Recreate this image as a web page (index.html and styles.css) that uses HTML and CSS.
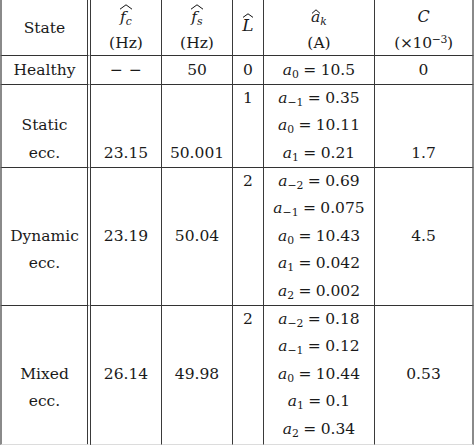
FILE: index.html
```html
<!DOCTYPE html>
<html>
<head>
<meta charset="utf-8">
<link rel="stylesheet" href="styles.css">
</head>
<body>
<div class="tbl">
  <!-- header -->
  <div class="c first hd mid">State</div>
  <div class="c hd">
    <div><span class="hat"><svg class="hs hw" width="13" height="6" viewBox="0 0 13 6"><path d="M0.5 5.2 L6.5 0.8 L12.5 5.2" /></svg><i>f</i><sub><i>c</i></sub></span></div>
    <div>(Hz)</div>
  </div>
  <div class="c hd">
    <div><span class="hat"><svg class="hs hw" width="13" height="6" viewBox="0 0 13 6"><path d="M0.5 5.2 L6.5 0.8 L12.5 5.2" /></svg><i>f</i><sub><i>s</i></sub></span></div>
    <div>(Hz)</div>
  </div>
  <div class="c hd mid"><span class="hat big"><svg class="hs hl" width="11" height="5" viewBox="0 0 11 5"><path d="M0.5 4.4 L5.5 0.8 L10.5 4.4" /></svg><i>L</i></span></div>
  <div class="c hd">
    <div><span class="hat"><svg class="hs ha" width="9" height="5" viewBox="0 0 9 5"><path d="M0.5 4.4 L4.5 0.8 L8.5 4.4" /></svg><i>a</i></span><sub><i>k</i></sub></div>
    <div>(A)</div>
  </div>
  <div class="c last hd">
    <div><i class="cal">C</i></div>
    <div class="unit">(×10<sup>−3</sup>)</div>
  </div>

  <!-- healthy -->
  <div class="c first one">Healthy</div>
  <div class="c one"><span><span class="minus">−</span><span class="minus">−</span></span></div>
  <div class="c one">50</div>
  <div class="c one">0</div>
  <div class="c one"><span><i>a</i><sub>0</sub><span class="eq">=</span>10.5</span></div>
  <div class="c last one">0</div>

  <!-- static -->
  <div class="c first ml l2"><div>Static</div><div>ecc.</div></div>
  <div class="c ml l3">23.15</div>
  <div class="c ml l3">50.001</div>
  <div class="c ml">1</div>
  <div class="c ml">
    <div><i>a</i><sub>−1</sub><span class="eq">=</span>0.35</div>
    <div><i>a</i><sub>0</sub><span class="eq">=</span>10.11</div>
    <div><i>a</i><sub>1</sub><span class="eq">=</span>0.21</div>
  </div>
  <div class="c last ml l3">1.7</div>

  <!-- dynamic -->
  <div class="c first ml l3"><div>Dynamic</div><div>ecc.</div></div>
  <div class="c ml l3">23.19</div>
  <div class="c ml l3">50.04</div>
  <div class="c ml">2</div>
  <div class="c ml">
    <div><i>a</i><sub>−2</sub><span class="eq">=</span>0.69</div>
    <div><i>a</i><sub>−1</sub><span class="eq">=</span>0.075</div>
    <div><i>a</i><sub>0</sub><span class="eq">=</span>10.43</div>
    <div><i>a</i><sub>1</sub><span class="eq">=</span>0.042</div>
    <div><i>a</i><sub>2</sub><span class="eq">=</span>0.002</div>
  </div>
  <div class="c last ml l3">4.5</div>

  <!-- mixed -->
  <div class="c first ml l3 endrow"><div>Mixed</div><div>ecc.</div></div>
  <div class="c ml l3 endrow">26.14</div>
  <div class="c ml l3 endrow">49.98</div>
  <div class="c ml endrow">2</div>
  <div class="c ml endrow">
    <div><i>a</i><sub>−2</sub><span class="eq">=</span>0.18</div>
    <div><i>a</i><sub>−1</sub><span class="eq">=</span>0.12</div>
    <div><i>a</i><sub>0</sub><span class="eq">=</span>10.44</div>
    <div><i>a</i><sub>1</sub><span class="eq">=</span>0.1</div>
    <div><i>a</i><sub>2</sub><span class="eq">=</span>0.34</div>
  </div>
  <div class="c last ml l3 endrow">0.53</div>
</div>
</body>
</html>
```

FILE: styles.css
```css
* { box-sizing: border-box; }
html, body { margin: 0; padding: 0; background: #fff; }
body {
  font-family: "DejaVu Serif", serif;
  font-size: 15.5px;
  color: #1a1a1a;
}
.tbl {
  display: grid;
  grid-template-columns: 91px 71px 71px 31px 111px 99px;
  grid-template-rows: 56px 29px 83px 138px 139px;
  width: 474px;
}
.c {
  display: flex;
  flex-direction: column;
  align-items: center;
  text-align: center;
  white-space: nowrap;
  border-right: 1px solid #3a3a3a;
  border-bottom: 1px solid #333;
}
.first {
  border-left: 2px solid #8a8a8a;
  border-right: 4px double #3a3a3a;
}
.last { border-right: 2px solid #8a8a8a; }
.endrow { border-bottom-color: #dcdcdc; }

.hd { padding-top: 4px; line-height: 26px; }
.hd.mid { justify-content: center; padding-top: 0; }
.one { justify-content: center; line-height: 28px; }
.ml { line-height: 27.4px; }
.l2 { padding-top: 27.4px; }
.l3 { padding-top: 54.8px; }

i { font-style: italic; }
sub, sup {
  font-size: 0.7em;
  line-height: 0;
  position: relative;
}
sub { vertical-align: -0.28em; }
sup { vertical-align: 0.5em; }
.eq { margin: 0 0.28em; }
.minus { margin: 0 3px; }
.unit { letter-spacing: -0.02em; }
.cal { font-style: italic; font-size: 16px; }

.hat { position: relative; display: inline-block; line-height: 1; }
.hat.big { font-size: 17px; margin-top: -4px; }
.hs { position: absolute; left: 50%; transform: translateX(-50%); }
.hs path { fill: none; stroke: #111; stroke-width: 1; stroke-linejoin: miter; }
.hw { top: -6px; }
.hl { top: -4px; }
.ha { top: -1px; }
```
